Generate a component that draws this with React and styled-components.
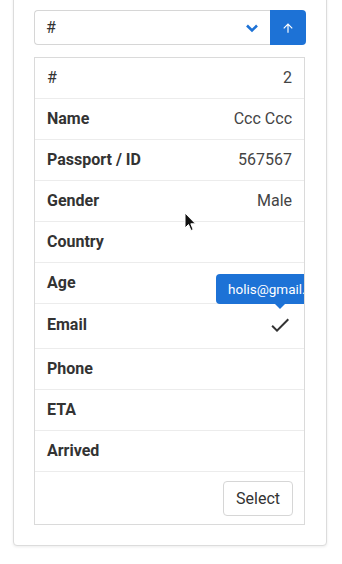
import React from "react";
import styled, { createGlobalStyle } from "styled-components";

const Global = createGlobalStyle`
  html, body { margin: 0; padding: 0; background: #fff; }
  body { font-family: Roboto, "Noto Sans", Arial, sans-serif; color: #333; overflow: hidden; }
  * { box-sizing: border-box; }
`;

const Page = styled.div`
  position: relative;
  display: flow-root;
  width: 342px;
  height: 564px;
  padding-left: 13px;
`;

const Card = styled.div`
  width: 314px;
  margin-top: -12px;
  padding: 21px 20px 20px 20px;
  border: 1px solid #dcdcdc;
  border-radius: 4px;
  box-shadow: 0 1px 3px rgba(0, 0, 0, 0.08);
  background: #fff;
`;

const SortBar = styled.div`
  display: flex;
  height: 35px;
  margin-bottom: 12px;
`;

const SelectBox = styled.div`
  flex: 1;
  display: flex;
  align-items: center;
  justify-content: space-between;
  padding: 0 11px 0 11px;
  border: 1px solid #d6d6d6;
  border-right: none;
  border-radius: 4px 0 0 4px;
  font-size: 16px;
  color: #333;
`;

const SortButton = styled.button`
  width: 36px;
  border: none;
  border-radius: 0 4px 4px 0;
  background: #1d72d6;
  display: flex;
  align-items: center;
  justify-content: center;
  padding: 0;
`;

const Table = styled.div`
  width: 271px;
  border: 1px solid #dadada;
  overflow: hidden;
`;

const Row = styled.div`
  display: flex;
  align-items: center;
  justify-content: space-between;
  height: ${(p) => (p.$h || 41) - (p.$first ? 1 : 0)}px;
  padding: 0 12px ${(p) => (p.$h ? 3 : 2)}px;
  border-top: ${(p) => (p.$first ? "none" : "1px solid #ececec")};
  font-size: 16px;
`;

const Label = styled.span`
  font-weight: ${(p) => (p.$regular ? 400 : 700)};
  color: #333;
`;

const Value = styled.span`
  position: relative;
  color: #444;
  display: flex;
  align-items: center;
`;

const Tooltip = styled.div`
  position: absolute;
  left: -52px;
  top: -39px;
  height: 30px;
  padding: 0 12px;
  border-radius: 4px;
  background: #1d72d6;
  color: #fff;
  font-size: 13.5px;
  line-height: 30px;
  white-space: nowrap;
  &::after {
    content: "";
    position: absolute;
    left: 59px;
    bottom: -5px;
    border-left: 5px solid transparent;
    border-right: 5px solid transparent;
    border-top: 5px solid #1d72d6;
  }
`;

const Footer = styled.div`
  display: flex;
  justify-content: flex-end;
  align-items: center;
  height: 53px;
  padding: 0 11px;
  border-top: 1px solid #ececec;
`;

const Button = styled.button`
  width: 70px;
  height: 35px;
  border: 1px solid #d6d6d6;
  border-radius: 4px;
  background: #fff;
  font-family: Roboto, Arial, sans-serif;
  font-size: 16px;
  color: #333;
`;

const Cursor = styled.svg`
  position: absolute;
  left: 184px;
  top: 212px;
`;

const rows = [
  { label: "Name", value: "Ccc Ccc" },
  { label: "Passport / ID", value: "567567" },
  { label: "Gender", value: "Male" },
  { label: "Country", value: "" },
  { label: "Age", value: "" },
];

const rows2 = ["Phone", "ETA", "Arrived"];

export default function App() {
  return (
    <>
      <Global />
      <Page>
        <Card>
          <SortBar>
            <SelectBox>
              <span>#</span>
              <svg width="14" height="10" viewBox="0 0 14 10">
                <path d="M2 2.5 L7 7.5 L12 2.5" fill="none" stroke="#1d72d6" strokeWidth="2.6" />
              </svg>
            </SelectBox>
            <SortButton>
              <svg width="14" height="14" viewBox="0 0 24 24">
                <path d="M4 12l1.41 1.41L11 7.83V20h2V7.83l5.58 5.59L20 12l-8-8-8 8z" fill="#fff" />
              </svg>
            </SortButton>
          </SortBar>
          <Table>
            <Row $first>
              <Label $regular>#</Label>
              <Value>2</Value>
            </Row>
            {rows.map((r) => (
              <Row key={r.label}>
                <Label>{r.label}</Label>
                <Value>{r.value}</Value>
              </Row>
            ))}
            <Row $h={45}>
              <Label>Email</Label>
              <Value>
                <Tooltip>holis@gmail.com</Tooltip>
                <svg width="24" height="24" viewBox="0 0 24 24">
                  <path d="M9 16.17L4.83 12l-1.42 1.41L9 19 21 7l-1.41-1.41z" fill="#333" />
                </svg>
              </Value>
            </Row>
            {rows2.map((l) => (
              <Row key={l}>
                <Label>{l}</Label>
              </Row>
            ))}
            <Footer>
              <Button>Select</Button>
            </Footer>
          </Table>
        </Card>
        <Cursor width="14" height="20" viewBox="0 0 14 20">
          <path d="M1 1 L1 16 L4.5 12.5 L7 18.5 L9.2 17.6 L6.8 11.8 L11.5 11.8 Z" fill="#111" stroke="#fff" strokeWidth="1" />
        </Cursor>
      </Page>
    </>
  );
}
